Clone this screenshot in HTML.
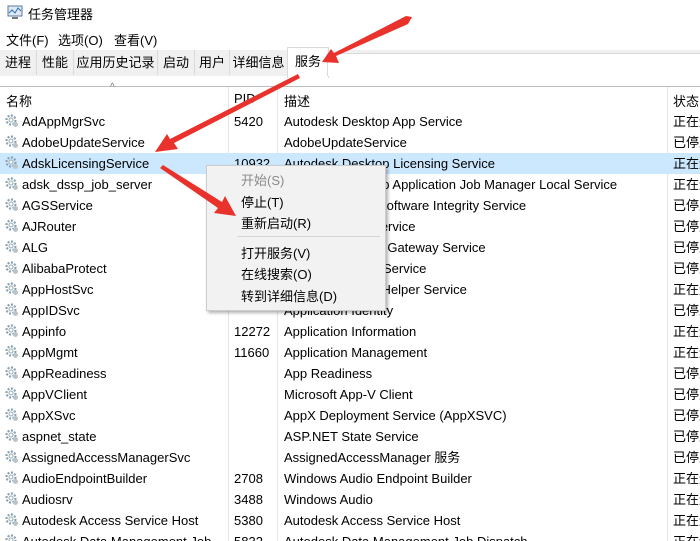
<!DOCTYPE html>
<html><head><meta charset="utf-8"><style>
body{margin:0;width:700px;height:541px;overflow:hidden;background:#fff;font-family:"Liberation Sans","Noto Sans CJK SC",sans-serif;font-size:13px;color:#000;position:relative}
.a{position:absolute;white-space:nowrap}
.tab{position:absolute;top:50px;height:25px;background:#f0f0f0;border-right:1px solid #dadada;line-height:26px;text-align:center;font-size:13px}
.row{position:absolute;left:0;width:700px;height:21px;line-height:21px;white-space:nowrap;overflow:hidden}
.row span{position:absolute;white-space:nowrap}
.ic{position:absolute;left:5px;top:3px;width:14px;height:14px}
.menu{position:absolute;left:206px;top:165px;width:178px;height:144px;background:#f2f2f2;border:1px solid #ccc;box-shadow:2px 2px 3px rgba(0,0,0,.3)}
.menu div{position:absolute;left:34px;font-size:13px}
#rows{position:absolute;left:0;top:0;width:700px;height:541px;overflow:hidden}
</style></head><body>
<svg class="a" style="left:7px;top:5px" width="16" height="15"><rect x="1" y="1" width="14" height="10" fill="#dfe9f3" stroke="#5b7a99"/><polyline points="2,8 5,5 8,8 11,3 14,6" fill="none" stroke="#2d6db5"/><rect x="5" y="12" width="6" height="2" fill="#777"/></svg>
<div class="a" style="left:28px;top:4px">任务管理器</div>
<div class="a" style="left:6px;top:30px">文件(F)</div>
<div class="a" style="left:58px;top:30px">选项(O)</div>
<div class="a" style="left:114px;top:30px">查看(V)</div>
<div class="a" style="left:0;top:50px;width:700px;height:26px;background:#f0f0f0"></div>
<div class="tab" style="left:0;width:36px">进程</div>
<div class="tab" style="left:37px;width:36px">性能</div>
<div class="tab" style="left:74px;width:83px">应用历史记录</div>
<div class="tab" style="left:158px;width:36px">启动</div>
<div class="tab" style="left:195px;width:34px">用户</div>
<div class="tab" style="left:230px;width:57px">详细信息</div>
<div class="a" style="left:287px;top:47px;width:40px;height:30px;background:#fff;border:1px solid #dadada;border-bottom:none;line-height:28px;text-align:center">服务</div>
<div class="a" style="left:327px;top:53px;width:373px;height:22px;background:#fff;border-top:1px solid #dadada;border-left:1px solid #dadada"></div>
<div class="a" style="left:0;top:86px;width:700px;height:1px;background:#bdbdbd"></div>
<div class="a" style="left:110px;top:82px;font-size:10px;color:#777">^</div>
<div class="a" style="left:6px;top:91px">名称</div>
<div class="a" style="left:234px;top:91px">PID</div>
<div class="a" style="left:284px;top:91px">描述</div>
<div class="a" style="left:673px;top:91px">状态</div>
<div class="a" style="left:228px;top:87px;width:1px;height:454px;background:#e5e5e5"></div>
<div class="a" style="left:277px;top:87px;width:1px;height:454px;background:#e5e5e5"></div>
<div class="a" style="left:667px;top:87px;width:1px;height:454px;background:#e5e5e5"></div>
<div id="rows"></div>
<div class="menu">
<div style="top:4px;color:#8a8a8a">开始(S)</div>
<div style="top:26px">停止(T)</div>
<div style="top:47px">重新启动(R)</div>
<span style="position:absolute;left:30px;top:70px;width:143px;height:1px;background:#d5d5d5"></span>
<div style="top:77px">打开服务(V)</div>
<div style="top:98px">在线搜索(O)</div>
<div style="top:120px">转到详细信息(D)</div>
</div>
<svg class="a" style="left:0;top:0" width="700" height="541">
<g fill="#e8322b">
<polygon points="412,17 408,24 336,56 339,63 322,62 331,49 334,53 406,16"/>
<polygon points="298,74 300,78 174,143 178,149 155,152 167,134 170,139"/>
<polygon points="160,168 163,165 222,202 225,196 236,216 214,213 218,208"/>
</g></svg>
<script>
var d=[["AdAppMgrSvc","5420","Autodesk Desktop App Service","正在运行"],["AdobeUpdateService","","AdobeUpdateService","已停止"],["AdskLicensingService","10932","Autodesk Desktop Licensing Service","正在运行"],["adsk_dssp_job_server","","Autodesk Desktop Application Job Manager Local Service","正在运行"],["AGSService","","Adobe Genuine Software Integrity Service","已停止"],["AJRouter","","AllJoyn Router Service","已停止"],["ALG","","Application Layer Gateway Service","已停止"],["AlibabaProtect","","Alibaba PC Safe Service","已停止"],["AppHostSvc","","Application Host Helper Service","正在运行"],["AppIDSvc","","Application Identity","已停止"],["Appinfo","12272","Application Information","正在运行"],["AppMgmt","11660","Application Management","正在运行"],["AppReadiness","","App Readiness","已停止"],["AppVClient","","Microsoft App-V Client","已停止"],["AppXSvc","","AppX Deployment Service (AppXSVC)","已停止"],["aspnet_state","","ASP.NET State Service","已停止"],["AssignedAccessManagerSvc","","AssignedAccessManager 服务","已停止"],["AudioEndpointBuilder","2708","Windows Audio Endpoint Builder","正在运行"],["Audiosrv","3488","Windows Audio","正在运行"],["Autodesk Access Service Host","5380","Autodesk Access Service Host","正在运行"],["Autodesk Data Management Job","5832","Autodesk Data Management Job Dispatch","正在运行"]];
var g='<svg class="ic" viewBox="0 0 14 14"><circle cx="6" cy="6" r="4.5" fill="none" stroke="#8aa0b4" stroke-width="2.2" stroke-dasharray="2 1.5"/><circle cx="6" cy="6" r="2" fill="#fff" stroke="#9aa" /><circle cx="10.5" cy="10.5" r="2.5" fill="#b8c4cc"/></svg>';
var h='';d.forEach(function(r,i){var y=111+i*21;h+='<div class="row" style="top:'+y+'px;'+(i==2?'background:#cce8ff':'')+'">'+g+'<span style="left:22px">'+r[0]+'</span><span style="left:234px">'+r[1]+'</span><span style="left:284px">'+r[2]+'</span><span style="left:673px">'+r[3]+'</span></div>';});
document.getElementById('rows').innerHTML=h;
</script>
</body></html>
